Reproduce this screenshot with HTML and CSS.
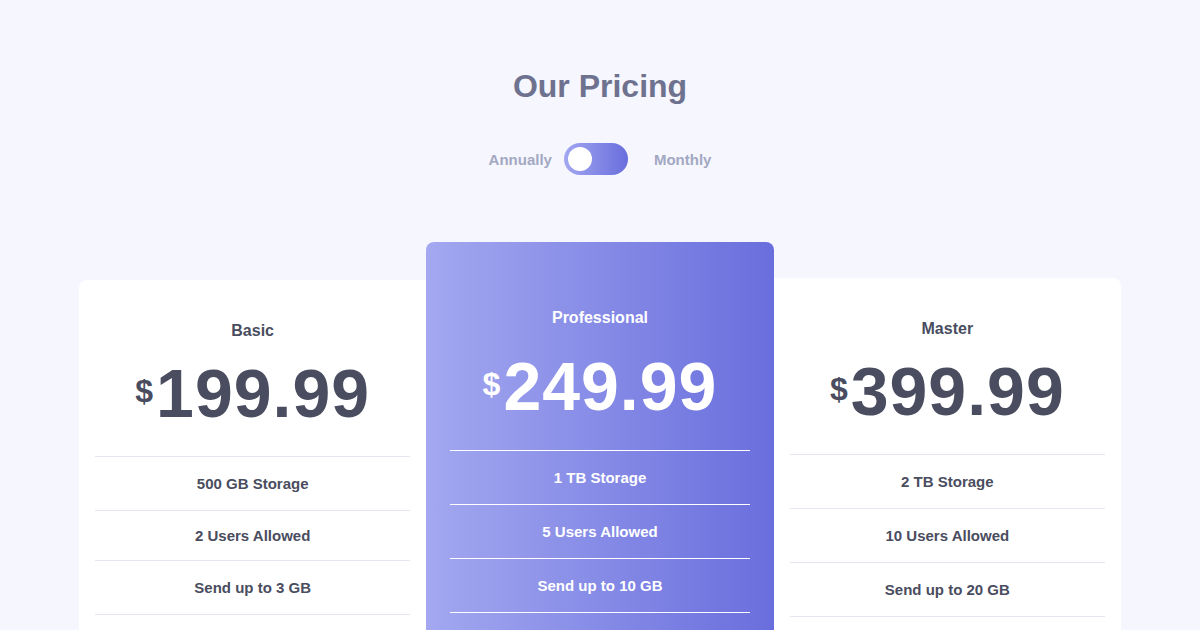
FILE: index.html
```html
<!DOCTYPE html>
<html lang="en">
<head>
    <meta charset="UTF-8">
    <meta name="viewport" content="width=device-width, initial-scale=1.0">
    <title>Pricing</title>
    <link rel="stylesheet" href="styles.css">
</head>
<body>

    <header class="top">
        <h1>Our Pricing</h1>
        <div class="switch-row">
            <span class="switch-label annual">Annually</span>
            <button class="switch" aria-label="Toggle billing"><span class="knob"></span></button>
            <span class="switch-label monthly">Monthly</span>
        </div>
    </header>

    <main class="plans">
        <div class="plan side left">
            <h2>Basic</h2>
            <div class="price"><span class="cur">$</span><span class="amount">199.99</span></div>
            <ul>
                <li>500 GB Storage</li>
                <li class="short">2 Users Allowed</li>
                <li>Send up to 3 GB</li>
            </ul>
        </div>

        <div class="plan featured">
            <h2>Professional</h2>
            <div class="price"><span class="cur">$</span><span class="amount">249.99</span></div>
            <ul>
                <li>1 TB Storage</li>
                <li>5 Users Allowed</li>
                <li>Send up to 10 GB</li>
            </ul>
        </div>

        <div class="plan side right">
            <h2>Master</h2>
            <div class="price"><span class="cur">$</span><span class="amount">399.99</span></div>
            <ul>
                <li>2 TB Storage</li>
                <li>10 Users Allowed</li>
                <li>Send up to 20 GB</li>
            </ul>
        </div>
    </main>

</body>
</html>
```

FILE: styles.css
```css
body {
    margin: 0;
    padding-top: 66px;
    font-family: "Liberation Sans", Arial, sans-serif;
    font-weight: bold;
    background-color: #f5f6fe;
    color: #4a4d60;
}

.top {
    text-align: center;
}

h1 {
    margin: 0;
    font-size: 32px;
    line-height: 40px;
    color: #6e728e;
}

.switch-row {
    display: flex;
    align-items: center;
    justify-content: center;
    margin-top: 37px;
}

.switch-label {
    font-size: 15px;
    color: #a3a8c2;
}

.annual {
    margin-right: 12px;
}

.monthly {
    margin-left: 26px;
}

.switch {
    width: 64px;
    height: 32px;
    padding: 4px;
    border: none;
    border-radius: 16px;
    background: linear-gradient(to right, #a2a7f0, #696edd);
    display: flex;
    align-items: center;
    cursor: pointer;
}

.knob {
    width: 24px;
    height: 24px;
    border-radius: 50%;
    background: #fff;
}

.plans {
    max-width: 1042px;
    margin: 67px auto 0;
    display: grid;
    grid-template-columns: 1fr 1fr 1fr;
    align-items: start;
}

.plan {
    background: #fff;
    text-align: center;
    padding: 41px 16px 60px;
}

.plan.left {
    margin-top: 38px;
    border-radius: 8px 0 0 8px;
}

.plan.right {
    margin-top: 36px;
    border-radius: 0 8px 8px 0;
}

.plan.featured {
    padding: 66px 24px 80px;
    border-radius: 8px;
    color: #fff;
    background: linear-gradient(to right, #a3a8f0, #696edd);
}

h2 {
    margin: 0;
    font-size: 16px;
    line-height: 20px;
}

.price {
    display: flex;
    align-items: center;
    justify-content: center;
    margin-top: 16px;
}

.featured .price {
    margin-top: 22px;
}

.cur {
    font-size: 32px;
    line-height: 32px;
    margin: 0 3px 4px 0;
}

.amount {
    font-size: 68px;
    line-height: 72px;
    letter-spacing: 1px;
}

ul {
    list-style: none;
    margin: 27px 0 0;
    padding: 0;
    border-top: 1px solid #e4e6f1;
}

.featured ul {
    margin-top: 28px;
    border-top-color: #fff;
}

li {
    font-size: 15px;
    line-height: 53px;
    border-bottom: 1px solid #e4e6f1;
}

li.short {
    line-height: 49px;
}

.featured li {
    border-bottom-color: #fff;
}
```
